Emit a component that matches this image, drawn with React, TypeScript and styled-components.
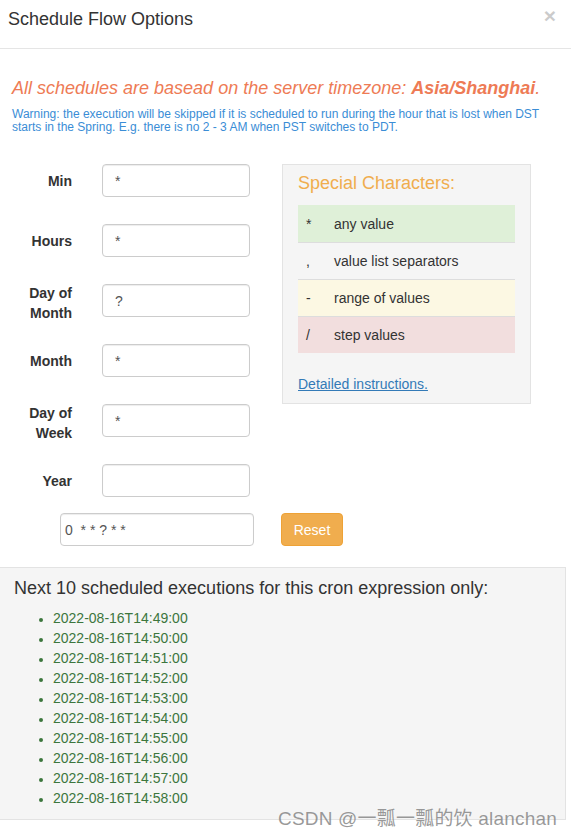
import React from "react";
import styled, { createGlobalStyle } from "styled-components";

const Global = createGlobalStyle`
  html, body { margin: 0; padding: 0; background: #fff; }
  body { font-family: "Liberation Sans", Arial, sans-serif; color: #333; font-size: 14px; }
  * { box-sizing: border-box; }
`;

const Page = styled.div`
  position: relative;
  width: 571px;
  min-height: 837px;
  background: #fff;
`;

const Header = styled.div`
  height: 49px;
  border-bottom: 1px solid #e5e5e5;
  display: flex;
  align-items: flex-start;
  justify-content: space-between;
  padding: 8px 15px 0 8px;
`;

const Title = styled.h4`
  margin: 0;
  font-size: 18px;
  font-weight: normal;
  line-height: 22px;
  color: #333;
`;

const Close = styled.span`
  font-size: 21px;
  font-weight: bold;
  line-height: 16px;
  color: #000;
  opacity: 0.2;
`;

const Body = styled.div`
  padding: 28px 0 0 0;
`;

const TzNote = styled.div`
  font-size: 18px;
  font-style: italic;
  color: #ee7b55;
  line-height: 22px;
  padding-left: 12px;
  b { font-weight: bold; }
`;

const Warning = styled.div`
  margin-top: 9px;
  padding: 0 12px;
  font-size: 12px;
  line-height: 13px;
  color: #3a8dd6;
`;

const Main = styled.div`
  display: flex;
  align-items: flex-start;
  gap: 32px;
  margin-top: 30px;
`;

const FormGrid = styled.div`
  display: grid;
  grid-template-columns: 72px 148px;
  grid-auto-rows: 33px;
  column-gap: 30px;
  row-gap: 27px;
  align-items: center;
`;

const Label = styled.label<{ $multi?: boolean }>`
  text-align: right;
  font-weight: bold;
  font-size: 14px;
  line-height: 20px;
  color: #333;
  transform: translateY(${(p) => (p.$multi ? 2 : 0)}px);
`;

const Input = styled.input<{ $w?: number }>`
  width: ${(p) => p.$w ?? 148}px;
  height: 33px;
  border: 1px solid #ccc;
  border-radius: 4px;
  padding: 0 12px;
  font-family: "Liberation Sans", Arial, sans-serif;
  font-size: 14px;
  color: #555;
  box-shadow: inset 0 1px 1px rgba(0,0,0,.075);
  outline: none;
`;

const CronRow = styled.div`
  display: flex;
  align-items: center;
  gap: 27px;
  margin: 16px 0 0 60px;
`;

const CronInput = styled(Input)`
  padding: 0 4px;
`;

const ResetButton = styled.button`
  height: 33px;
  width: 62px;
  background: #f0ad4e;
  border: 1px solid #eea236;
  border-radius: 4px;
  color: #fff;
  font-family: "Liberation Sans", Arial, sans-serif;
  font-size: 14px;
  padding: 0;
`;

const Panel = styled.div`
  width: 249px;
  background: #f5f5f5;
  border: 1px solid #e3e3e3;
  padding: 8px 15px 9px 15px;
`;

const PanelTitle = styled.div`
  font-size: 18px;
  color: #f0ad4e;
  line-height: 20px;
  margin-bottom: 12px;
`;

const CharTable = styled.div`
  display: flex;
  flex-direction: column;
`;

const CharRow = styled.div<{ $bg: string }>`
  display: flex;
  height: 37px;
  align-items: center;
  background: ${(p) => p.$bg};
  border-top: 1px solid #ddd;
  &:first-child { border-top: none; }
  font-size: 14px;
  color: #333;
`;

const CharSym = styled.span`
  width: 36px;
  padding-left: 8px;
  color: #333;
`;

const Link = styled.a`
  display: inline-block;
  margin-top: 21px;
  color: #337ab7;
  text-decoration: underline;
  font-size: 14px;
  line-height: 20px;
`;

const Results = styled.div`
  margin-top: 21px;
  width: 566px;
  background: #f5f5f5;
  border: 1px solid #e3e3e3;
  border-left: none;
  padding: 8px 14px 11px 14px;
`;

const ResultsTitle = styled.div`
  font-size: 18px;
  line-height: 24px;
  color: #333;
  margin-bottom: 8px;
`;

const List = styled.ul`
  margin: 0;
  padding-left: 39px;
  color: #3c763d;
  font-size: 14px;
  line-height: 20px;
  li::marker { font-size: 12px; }
`;

const Watermark = styled.div`
  position: absolute;
  left: 278px;
  top: 803px;
  font-size: 19px;
  color: rgba(120,120,120,0.75);
  font-family: "Liberation Sans", "Noto Sans CJK SC", sans-serif;
  white-space: nowrap;
  letter-spacing: 0.2px;
`;

const fields: { label: React.ReactNode; value: string; multi?: boolean }[] = [
  { label: "Min", value: "*" },
  { label: "Hours", value: "*" },
  { label: <>Day of<br />Month</>, value: "?", multi: true },
  { label: "Month", value: "*" },
  { label: <>Day of<br />Week</>, value: "*", multi: true },
  { label: "Year", value: "" },
];

const chars = [
  { sym: "*", desc: "any value", bg: "#dff0d8" },
  { sym: ",", desc: "value list separators", bg: "#f5f5f5" },
  { sym: "-", desc: "range of values", bg: "#fcf8e3" },
  { sym: "/", desc: "step values", bg: "#f2dede" },
];

const times = [49, 50, 51, 52, 53, 54, 55, 56, 57, 58].map((m) => `2022-08-16T14:${m}:00`);

export default function App() {
  return (
    <Page>
      <Global />
      <Header>
        <Title>Schedule Flow Options</Title>
        <Close>×</Close>
      </Header>
      <Body>
        <TzNote>
          All schedules are basead on the server timezone: <b>Asia/Shanghai</b>.
        </TzNote>
        <Warning>
          Warning: the execution will be skipped if it is scheduled to run during the hour that is lost when DST
          starts in the Spring. E.g. there is no 2 - 3 AM when PST switches to PDT.
        </Warning>
        <Main>
          <FormGrid>
            {fields.map((f, i) => (
              <React.Fragment key={i}>
                <Label $multi={f.multi}>{f.label}</Label>
                <Input defaultValue={f.value} />
              </React.Fragment>
            ))}
          </FormGrid>
          <Panel>
            <PanelTitle>Special Characters:</PanelTitle>
            <CharTable>
              {chars.map((c) => (
                <CharRow key={c.sym} $bg={c.bg}>
                  <CharSym>{c.sym}</CharSym>
                  <span>{c.desc}</span>
                </CharRow>
              ))}
            </CharTable>
            <Link href="#">Detailed instructions.</Link>
          </Panel>
        </Main>
        <CronRow>
          <CronInput $w={194} defaultValue="0  * * ? * *" />
          <ResetButton>Reset</ResetButton>
        </CronRow>
      </Body>
      <Results>
        <ResultsTitle>Next 10 scheduled executions for this cron expression only:</ResultsTitle>
        <List>
          {times.map((t) => (
            <li key={t}>{t}</li>
          ))}
        </List>
      </Results>
      <Watermark>CSDN @一瓢一瓢的饮 alanchan</Watermark>
    </Page>
  );
}
